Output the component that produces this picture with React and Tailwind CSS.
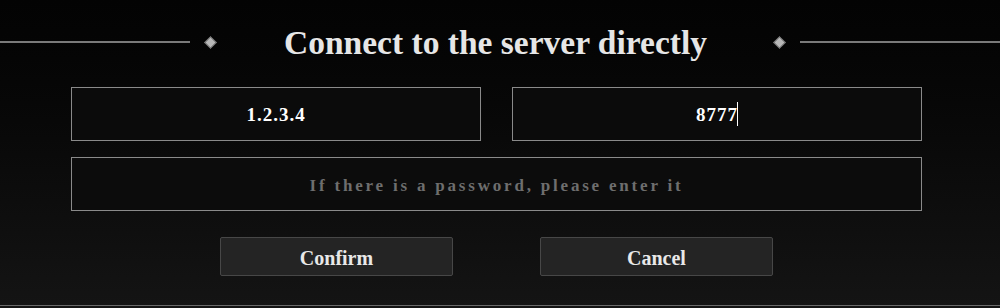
export default function App() {
  const serif = { fontFamily: '"Liberation Serif", "DejaVu Serif", serif' };
  return (
    <div className="w-[1000px] h-[308px] overflow-hidden flex flex-col bg-gradient-to-b from-[#030303] via-[#0a0a0a] to-[#141414]" style={serif}>
      <div className="h-[84px] flex items-center">
        <div className="w-[190px] h-[2px] bg-[#7a7a7a]" />
        <div className="w-[9px] h-[9px] rotate-45 bg-[#b8b8b8] border border-[#666] ml-[16px] mr-[69px]" />
        <div className="text-[33.5px] font-bold text-[#e6e6e6] leading-none pt-[2px] whitespace-nowrap">Connect to the server directly</div>
        <div className="w-[9px] h-[9px] rotate-45 bg-[#b8b8b8] border border-[#666] ml-[68px] mr-[16px]" />
        <div className="flex-1 h-[2px] bg-[#7a7a7a]" />
      </div>
      <div className="px-[71px] pt-[3px] flex flex-col gap-[16px] w-[993px]">
        <div className="flex gap-[31px]">
          <div className="w-[410px] h-[54px] border border-[#8a8a8a] bg-[#0b0b0b] flex items-center justify-center text-[19px] font-bold text-white tracking-[1px] pt-[3px]">1.2.3.4</div>
          <div className="w-[410px] h-[54px] border border-[#8a8a8a] bg-[#0b0b0b] flex items-center justify-center text-[19px] font-bold text-white tracking-[1px] pt-[3px]">
            <span>8777</span>
            <span className="w-[1px] h-[24px] bg-white -ml-[1px] -mt-[3px]" />
          </div>
        </div>
        <div className="w-[851px] h-[54px] border border-[#8a8a8a] bg-[#0c0c0c] flex items-center justify-center text-[17px] font-bold text-[#6e6e6e] tracking-[2.8px] pt-[3px]">If there is a password, please enter it</div>
      </div>
      <div className="flex justify-center gap-[87px] mt-[26px] pr-[7px]">
        <button className="w-[233px] h-[39px] bg-[#242424] border border-[#474747] rounded-[2px] text-[20px] font-bold text-[#e8e8e8] pt-[3px]">Confirm</button>
        <button className="w-[233px] h-[39px] bg-[#242424] border border-[#474747] rounded-[2px] text-[20px] font-bold text-[#e8e8e8] pt-[3px]">Cancel</button>
      </div>
      <div className="mt-auto mb-[2px] h-[1px] bg-[#6a6a6a]" />
    </div>
  );
}
